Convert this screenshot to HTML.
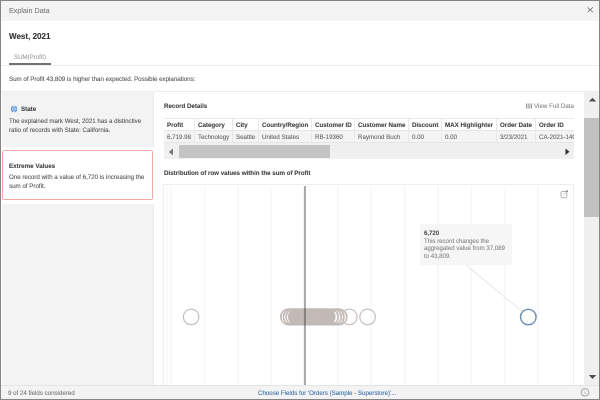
<!DOCTYPE html>
<html><head><meta charset="utf-8">
<style>
*{margin:0;padding:0;box-sizing:border-box}
html,body{width:600px;height:400px;overflow:hidden;background:#fff}
body{position:relative;font-family:"Liberation Sans",sans-serif;color:#555}
.a{position:absolute;white-space:nowrap}
.r{position:absolute}
</style></head><body>
<div class="r" style="left:1px;top:1px;width:598px;height:19.6px;background:#f4f4f4"></div>
<svg class="r" style="left:586px;top:6px" width="8" height="8" viewBox="0 0 8 8"><path d="M1.6 1.4L6.9 6.1M6.9 1.4L1.6 6.1" stroke="#6a6a6a" stroke-width="1"/></svg>
<div class="r" style="left:1px;top:65.1px;width:598px;height:1px;background:#ededed"></div>
<div class="r" style="left:9px;top:62.7px;width:42.3px;height:2.1px;background:#727272"></div>
<div class="r" style="left:1px;top:90.6px;width:598px;height:1px;background:#ececec"></div>
<div class="r" style="left:2px;top:91.6px;width:151.7px;height:55.8px;background:#f3f3f3;border-right:1px solid #ececec"></div>
<svg class="r" style="left:10.3px;top:104.8px" width="8" height="8" viewBox="0 0 8 8"><circle cx="4" cy="4" r="3.2" fill="#629ad2"/><ellipse cx="4" cy="4" rx="1.1" ry="2.9" fill="none" stroke="#e4eef8" stroke-width="0.6"/><path d="M0.9 4H7.1" stroke="#c9dcef" stroke-width="0.5"/></svg>
<div class="r" style="left:2px;top:149.6px;width:151.4px;height:50.2px;background:#fff;border:1.2px solid #efa9a2;border-radius:1.5px"></div>
<div class="r" style="left:2px;top:203.7px;width:151.7px;height:182px;background:#f3f3f3;border-right:1px solid #ececec"></div>
<svg class="r" style="left:525px;top:102px" width="9" height="8" viewBox="0 0 9 8"><path d="M1.5 1.5V6.5M3.2 1.5V6.5M4.9 1.5V6.5M6.6 1.5V6.5" stroke="#999" stroke-width="1"/></svg>
<div class="r" style="left:164px;top:117.5px;width:410px;height:41px;background:#f0f0f0;overflow:hidden">
<div class="r" style="left:0;top:0;width:410px;height:12.5px;background:#fff;border-top:1px solid #e9e9e9"></div>
<div class="r" style="left:0;top:12.5px;width:410px;height:13px;background:#f4f4f4;border-top:1px solid #e6e6e6;border-bottom:1px solid #e6e6e6"></div>
<div class="r" style="left:30.0px;top:0;width:1px;height:25.5px;background:#e8e8e8"></div>
<div class="r" style="left:67.9px;top:0;width:1px;height:25.5px;background:#e8e8e8"></div>
<div class="r" style="left:94.3px;top:0;width:1px;height:25.5px;background:#e8e8e8"></div>
<div class="r" style="left:147.3px;top:0;width:1px;height:25.5px;background:#e8e8e8"></div>
<div class="r" style="left:190.1px;top:0;width:1px;height:25.5px;background:#e8e8e8"></div>
<div class="r" style="left:244.2px;top:0;width:1px;height:25.5px;background:#e8e8e8"></div>
<div class="r" style="left:277.2px;top:0;width:1px;height:25.5px;background:#e8e8e8"></div>
<div class="r" style="left:331.9px;top:0;width:1px;height:25.5px;background:#e8e8e8"></div>
<div class="r" style="left:371.1px;top:0;width:1px;height:25.5px;background:#e8e8e8"></div>
<svg class="r" style="left:4px;top:30px" width="6" height="8" viewBox="0 0 6 8"><path d="M5 0.5L0.8 3.9L5 7.3Z" fill="#777"/></svg>
<div class="r" style="left:15.3px;top:27.2px;width:151px;height:13.5px;background:#c4c4c4"></div>
<svg class="r" style="left:400.5px;top:30.5px" width="6" height="8" viewBox="0 0 6 8"><path d="M0.5 0.5L4.5 3.8L0.5 7Z" fill="#333"/></svg>
</div>
<div class="r" style="left:163.4px;top:183.6px;width:411px;height:220px;border:1px solid #eeeeee"></div>
<svg class="r" style="left:0;top:0" width="600" height="400" viewBox="0 0 600 400">
<rect x="166.3" y="186" width="1.2" height="200" fill="#f8f8f8"/>
<rect x="170.30" y="186" width="1.8" height="200" fill="#f8f8f8"/>
<rect x="203.65" y="186" width="1.8" height="200" fill="#f8f8f8"/>
<rect x="237.00" y="186" width="1.8" height="200" fill="#f8f8f8"/>
<rect x="270.35" y="186" width="1.8" height="200" fill="#f8f8f8"/>
<rect x="337.05" y="186" width="1.8" height="200" fill="#f8f8f8"/>
<rect x="370.40" y="186" width="1.8" height="200" fill="#f8f8f8"/>
<rect x="403.75" y="186" width="1.8" height="200" fill="#f8f8f8"/>
<rect x="437.10" y="186" width="1.8" height="200" fill="#f8f8f8"/>
<rect x="470.45" y="186" width="1.8" height="200" fill="#f8f8f8"/>
<rect x="503.80" y="186" width="1.8" height="200" fill="#f8f8f8"/>
<rect x="537.15" y="186" width="1.8" height="200" fill="#f8f8f8"/>
<path d="M466 265L522 311.5" stroke="#d8d8d8" stroke-width="0.8" fill="none"/>
<circle cx="191.1" cy="316.9" r="7.8" fill="none" stroke="#c9c2be" stroke-width="1.3"/>
<path d="M296.5 308.35H327A8.55 8.55 0 0 1 327 325.45H296.5A8.55 8.55 0 0 1 296.5 308.35Z" fill="#c1bab6"/>
<circle cx="288.6" cy="316.9" r="7.85" fill="none" stroke="#c1bab6" stroke-width="1.6"/>
<circle cx="291.3" cy="316.9" r="7.85" fill="none" stroke="#c1bab6" stroke-width="1.6"/>
<circle cx="293.9" cy="316.9" r="7.85" fill="none" stroke="#c1bab6" stroke-width="1.6"/>
<circle cx="330.3" cy="316.9" r="7.85" fill="none" stroke="#c1bab6" stroke-width="1.6"/>
<circle cx="333.3" cy="316.9" r="7.85" fill="none" stroke="#c1bab6" stroke-width="1.6"/>
<circle cx="336.2" cy="316.9" r="7.85" fill="none" stroke="#c1bab6" stroke-width="1.6"/>
<circle cx="339" cy="316.9" r="7.85" fill="none" stroke="#c1bab6" stroke-width="1.6"/>
<circle cx="349.3" cy="316.9" r="7.8" fill="none" stroke="#c9c2be" stroke-width="1.3"/>
<circle cx="367.6" cy="316.9" r="7.8" fill="none" stroke="#c9c2be" stroke-width="1.3"/>
<circle cx="528.3" cy="317" r="7.8" fill="none" stroke="#6f92b8" stroke-width="1.5"/>
<rect x="303.9" y="186" width="2.0" height="200" fill="#333" fill-opacity="0.43"/>
</svg>
<div class="r" style="left:419.6px;top:224px;width:92.8px;height:40.6px;background:#f6f6f6"></div>
<svg class="r" style="left:559px;top:189px" width="10" height="10" viewBox="0 0 10 10"><rect x="2" y="2.5" width="5.8" height="6.2" rx="1" fill="none" stroke="#a8a8a8" stroke-width="0.9"/><path d="M4.2 6.2L7.6 2.8" stroke="#bbb" stroke-width="0.8"/><circle cx="8" cy="2.2" r="0.9" fill="#777"/></svg>
<div class="r" style="left:584.1px;top:91.5px;width:14.9px;height:294px;background:#f0f0f0"></div>
<div class="r" style="left:584.1px;top:118px;width:14.9px;height:99px;background:#c1c1c1"></div>
<svg class="r" style="left:584.5px;top:95px" width="14" height="8" viewBox="0 0 14 8"><path d="M3.8 6.5L7.5 2.8L11.3 6.5Z" fill="#505050"/></svg>
<svg class="r" style="left:584.5px;top:373px" width="14" height="8" viewBox="0 0 14 8"><path d="M3.8 2L7.5 6L11.3 2Z" fill="#505050"/></svg>
<div class="r" style="left:1px;top:385px;width:598px;height:14px;background:#f3f3f3;border-top:1px solid #e4e4e4"></div>
<svg class="r" style="left:580px;top:387px" width="10" height="10" viewBox="0 0 10 10"><circle cx="5" cy="5.3" r="3.8" fill="none" stroke="#999" stroke-width="0.9"/><path d="M5 4.5V7" stroke="#aaa" stroke-width="0.8"/><circle cx="5" cy="3.4" r="0.45" fill="#aaa"/></svg>
<div class="a" style="left:8.7px;top:6.94px;font-size:14.320px;line-height:14.320px;font-weight:normal;color:#7c7c7c;-webkit-text-stroke:0.2px #7c7c7c;transform:scale(0.5000,0.5000);transform-origin:0 0;will-change:transform;">Explain Data</div>
<div class="a" style="left:8.5px;top:32.18px;font-size:16.112px;line-height:16.112px;font-weight:bold;color:#333;-webkit-text-stroke:0.2px #333;transform:scale(0.5000,0.5000);transform-origin:0 0;will-change:transform;">West, 2021</div>
<div class="a" style="left:14px;top:53.81px;font-size:12.254px;line-height:12.254px;font-weight:normal;color:#a0a0a0;-webkit-text-stroke:0.2px #a0a0a0;transform:scale(0.5000,0.5000);transform-origin:0 0;will-change:transform;">SUM(Profit)</div>
<div class="a" style="left:8.5px;top:75.78px;font-size:12.334px;line-height:12.334px;font-weight:normal;color:#555;-webkit-text-stroke:0.2px #555;transform:scale(0.5000,0.5000);transform-origin:0 0;will-change:transform;">Sum of Profit 43,809 is higher than expected. Possible explanations:</div>
<div class="a" style="left:20.8px;top:105.74px;font-size:12.432px;line-height:12.432px;font-weight:bold;color:#444;-webkit-text-stroke:0.2px #444;transform:scale(0.5000,0.5000);transform-origin:0 0;will-change:transform;">State</div>
<div class="a" style="left:8.5px;top:117.79px;font-size:12.311px;line-height:12.311px;font-weight:normal;color:#555;-webkit-text-stroke:0.2px #555;transform:scale(0.5000,0.5000);transform-origin:0 0;will-change:transform;">The explained mark West, 2021 has a distinctive</div>
<div class="a" style="left:8.5px;top:126.77px;font-size:12.360px;line-height:12.360px;font-weight:normal;color:#555;-webkit-text-stroke:0.2px #555;transform:scale(0.5000,0.5000);transform-origin:0 0;will-change:transform;">ratio of records with State: California.</div>
<div class="a" style="left:8.5px;top:162.71px;font-size:12.497px;line-height:12.497px;font-weight:bold;color:#444;-webkit-text-stroke:0.2px #444;transform:scale(0.5000,0.5000);transform-origin:0 0;will-change:transform;">Extreme Values</div>
<div class="a" style="left:8.5px;top:173.78px;font-size:12.342px;line-height:12.342px;font-weight:normal;color:#555;-webkit-text-stroke:0.2px #555;transform:scale(0.5000,0.5000);transform-origin:0 0;will-change:transform;">One record with a value of 6,720 is increasing the</div>
<div class="a" style="left:8.5px;top:182.77px;font-size:12.360px;line-height:12.360px;font-weight:normal;color:#555;-webkit-text-stroke:0.2px #555;transform:scale(0.5000,0.5000);transform-origin:0 0;will-change:transform;">sum of Profit.</div>
<div class="a" style="left:163.75px;top:102.77px;font-size:12.352px;line-height:12.352px;font-weight:bold;color:#444;-webkit-text-stroke:0.2px #444;transform:scale(0.5000,0.5000);transform-origin:0 0;will-change:transform;">Record Details</div>
<div class="a" style="left:534px;top:102.73px;font-size:12.444px;line-height:12.444px;font-weight:normal;color:#888;-webkit-text-stroke:0.2px #888;transform:scale(0.5000,0.5000);transform-origin:0 0;will-change:transform;">View Full Data</div>
<div class="a" style="left:167.3px;top:121.77px;font-size:12.360px;line-height:12.360px;font-weight:bold;color:#444;-webkit-text-stroke:0.2px #444;transform:scale(0.5000,0.5000);transform-origin:0 0;will-change:transform;">Profit</div>
<div class="a" style="left:167.3px;top:133.77px;font-size:12.360px;line-height:12.360px;font-weight:normal;color:#666;-webkit-text-stroke:0.2px #666;transform:scale(0.5000,0.5000);transform-origin:0 0;will-change:transform;">6,719.98</div>
<div class="a" style="left:197.8px;top:121.77px;font-size:12.360px;line-height:12.360px;font-weight:bold;color:#444;-webkit-text-stroke:0.2px #444;transform:scale(0.5000,0.5000);transform-origin:0 0;will-change:transform;">Category</div>
<div class="a" style="left:197.8px;top:133.77px;font-size:12.360px;line-height:12.360px;font-weight:normal;color:#666;-webkit-text-stroke:0.2px #666;transform:scale(0.5000,0.5000);transform-origin:0 0;will-change:transform;">Technology</div>
<div class="a" style="left:235.70000000000002px;top:121.77px;font-size:12.360px;line-height:12.360px;font-weight:bold;color:#444;-webkit-text-stroke:0.2px #444;transform:scale(0.5000,0.5000);transform-origin:0 0;will-change:transform;">City</div>
<div class="a" style="left:235.70000000000002px;top:133.77px;font-size:12.360px;line-height:12.360px;font-weight:normal;color:#666;-webkit-text-stroke:0.2px #666;transform:scale(0.5000,0.5000);transform-origin:0 0;will-change:transform;">Seattle</div>
<div class="a" style="left:262.1px;top:121.77px;font-size:12.360px;line-height:12.360px;font-weight:bold;color:#444;-webkit-text-stroke:0.2px #444;transform:scale(0.5000,0.5000);transform-origin:0 0;will-change:transform;">Country/Region</div>
<div class="a" style="left:262.1px;top:133.77px;font-size:12.360px;line-height:12.360px;font-weight:normal;color:#666;-webkit-text-stroke:0.2px #666;transform:scale(0.5000,0.5000);transform-origin:0 0;will-change:transform;">United States</div>
<div class="a" style="left:315.1px;top:121.77px;font-size:12.360px;line-height:12.360px;font-weight:bold;color:#444;-webkit-text-stroke:0.2px #444;transform:scale(0.5000,0.5000);transform-origin:0 0;will-change:transform;">Customer ID</div>
<div class="a" style="left:315.1px;top:133.77px;font-size:12.360px;line-height:12.360px;font-weight:normal;color:#666;-webkit-text-stroke:0.2px #666;transform:scale(0.5000,0.5000);transform-origin:0 0;will-change:transform;">RB-19360</div>
<div class="a" style="left:357.90000000000003px;top:121.77px;font-size:12.360px;line-height:12.360px;font-weight:bold;color:#444;-webkit-text-stroke:0.2px #444;transform:scale(0.5000,0.5000);transform-origin:0 0;will-change:transform;">Customer Name</div>
<div class="a" style="left:357.90000000000003px;top:133.77px;font-size:12.360px;line-height:12.360px;font-weight:normal;color:#666;-webkit-text-stroke:0.2px #666;transform:scale(0.5000,0.5000);transform-origin:0 0;will-change:transform;">Raymond Buch</div>
<div class="a" style="left:412.0px;top:121.77px;font-size:12.360px;line-height:12.360px;font-weight:bold;color:#444;-webkit-text-stroke:0.2px #444;transform:scale(0.5000,0.5000);transform-origin:0 0;will-change:transform;">Discount</div>
<div class="a" style="left:412.0px;top:133.77px;font-size:12.360px;line-height:12.360px;font-weight:normal;color:#666;-webkit-text-stroke:0.2px #666;transform:scale(0.5000,0.5000);transform-origin:0 0;will-change:transform;">0.00</div>
<div class="a" style="left:445.0px;top:121.77px;font-size:12.360px;line-height:12.360px;font-weight:bold;color:#444;-webkit-text-stroke:0.2px #444;transform:scale(0.5000,0.5000);transform-origin:0 0;will-change:transform;">MAX Highlighter</div>
<div class="a" style="left:445.0px;top:133.77px;font-size:12.360px;line-height:12.360px;font-weight:normal;color:#666;-webkit-text-stroke:0.2px #666;transform:scale(0.5000,0.5000);transform-origin:0 0;will-change:transform;">0.00</div>
<div class="a" style="left:499.7px;top:121.77px;font-size:12.360px;line-height:12.360px;font-weight:bold;color:#444;-webkit-text-stroke:0.2px #444;transform:scale(0.5000,0.5000);transform-origin:0 0;will-change:transform;">Order Date</div>
<div class="a" style="left:499.7px;top:133.77px;font-size:12.360px;line-height:12.360px;font-weight:normal;color:#666;-webkit-text-stroke:0.2px #666;transform:scale(0.5000,0.5000);transform-origin:0 0;will-change:transform;">3/23/2021</div>
<div class="a" style="left:538.9px;top:121.77px;font-size:12.360px;line-height:12.360px;font-weight:bold;color:#444;-webkit-text-stroke:0.2px #444;transform:scale(0.5000,0.5000);transform-origin:0 0;will-change:transform;">Order ID</div>
<div class="a" style="left:538.9px;top:133.77px;font-size:12.360px;line-height:12.360px;font-weight:normal;color:#666;-webkit-text-stroke:0.2px #666;transform:scale(0.5000,0.5000);transform-origin:0 0;will-change:transform;width:70.2px;overflow:hidden;">CA-2021-140366</div>
<div class="a" style="left:163.7px;top:169.76px;font-size:12.380px;line-height:12.380px;font-weight:bold;color:#444;-webkit-text-stroke:0.2px #444;transform:scale(0.5000,0.5000);transform-origin:0 0;will-change:transform;">Distribution of row values within the sum of Profit</div>
<div class="a" style="left:424px;top:229.86px;font-size:12.140px;line-height:12.140px;font-weight:bold;color:#505050;-webkit-text-stroke:0.2px #505050;transform:scale(0.5000,0.5000);transform-origin:0 0;will-change:transform;">6,720</div>
<div class="a" style="left:424px;top:237.86px;font-size:12.140px;line-height:12.140px;font-weight:normal;color:#858585;-webkit-text-stroke:0.2px #858585;transform:scale(0.5000,0.5000);transform-origin:0 0;will-change:transform;">This record changes the</div>
<div class="a" style="left:424px;top:244.86px;font-size:12.141px;line-height:12.141px;font-weight:normal;color:#858585;-webkit-text-stroke:0.2px #858585;transform:scale(0.5000,0.5000);transform-origin:0 0;will-change:transform;">aggregated value from 37,089</div>
<div class="a" style="left:424px;top:252.86px;font-size:12.140px;line-height:12.140px;font-weight:normal;color:#858585;-webkit-text-stroke:0.2px #858585;transform:scale(0.5000,0.5000);transform-origin:0 0;will-change:transform;">to 43,809.</div>
<div class="a" style="left:8.3px;top:389.79px;font-size:12.306px;line-height:12.306px;font-weight:normal;color:#777;-webkit-text-stroke:0.2px #777;transform:scale(0.5000,0.5000);transform-origin:0 0;will-change:transform;">9 of 24 fields considered</div>
<div class="a" style="left:257.5px;top:389.79px;font-size:12.310px;line-height:12.310px;font-weight:normal;color:#3d6fa8;-webkit-text-stroke:0.2px #3d6fa8;transform:scale(0.5000,0.5000);transform-origin:0 0;will-change:transform;">Choose Fields for 'Orders (Sample - Superstore)'...</div>
<div class="r" style="left:0;top:0;width:600px;height:400px;border:1px solid #858585"></div>
</body></html>
